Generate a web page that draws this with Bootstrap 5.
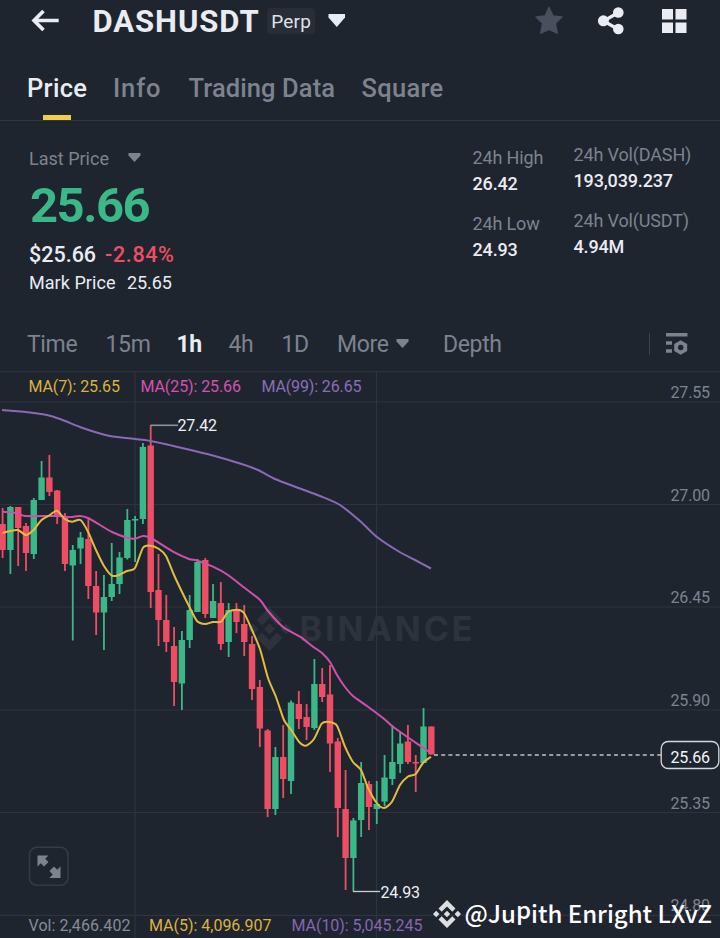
<!DOCTYPE html>
<html lang="en">
<head>
<meta charset="utf-8">
<meta name="viewport" content="width=device-width, initial-scale=1">
<title>DASHUSDT Perp</title>
<link href="https://cdn.jsdelivr.net/npm/bootstrap@5.3.0/dist/css/bootstrap.min.css" rel="stylesheet">
<style>
:root{--bg:#1f252f;--line:#2f363f;--muted:#7c838f;--bright:#e9ecf2;--up:#3ab888;--down:#ee4e63;--gold:#e5c04a}
body{background:var(--bg);color:var(--bright);font-family:Roboto,"Liberation Sans",sans-serif;overflow:hidden}
.screen{width:720px;height:938px}
.topbar{height:41px;padding-left:30px;padding-right:33px}
.pair{font-size:31px;line-height:40px;letter-spacing:.95px;margin-left:32.5px;padding-top:2px}
.perp{font-size:19px;line-height:28px;height:26px;width:48px;background:#282d37;border-radius:4px;letter-spacing:.2px;margin-left:7.5px;color:#dfe2e8}
.pair-caret{margin-left:13px}
.share{margin-left:34px}
.tiles{margin-left:37px}
.section-tabs{display:grid;grid-template-columns:86px 75.500px 173px auto;height:80px;padding:30px 0 0 27px;border-bottom:1px solid var(--line);font-size:25.5px;font-weight:500;line-height:34px;letter-spacing:.3px;color:var(--muted)}
.section-tabs .active{color:var(--bright)}
.section-tabs .wide{letter-spacing:.1px}
.section-tabs .info{letter-spacing:.9px}
.marker{display:block;width:28px;height:5px;margin:10px 0 0 16px;background:#f0cc48}
.summary{height:196px;padding:0 27.5px 0 29px;line-height:26px;font-size:18px}
.quote{padding-top:25px}
.caption-muted{color:var(--muted)}
.caption-muted svg{margin-left:19px;vertical-align:3px}
.big-price{font-size:49px;line-height:68px;letter-spacing:-1.5px;color:var(--up);margin-left:1px}
.fiat{font-size:21.5px;font-weight:500;line-height:30px}
.fiat .text-down{margin-left:9px;letter-spacing:.6px;color:var(--down)}
.mark-row{line-height:26px;letter-spacing:.05px}
.mark-row b{font-weight:400;margin-left:7px;letter-spacing:-.1px}
.stats{display:grid;grid-template-columns:101px 119px;letter-spacing:-.15px}
.stats dl{margin:0}
.stats dt{font-weight:400;color:var(--muted);line-height:26px}
.stats dd{font-weight:500;margin:0 0 14px;line-height:26px}
.stats dl:first-child{padding-top:24px}
.stats dl:last-child{padding-top:21px}
.frames{height:54px;padding:0 32px 0 27px;font-size:23px;line-height:30px;color:var(--muted)}
.frame-list{display:grid;grid-template-columns:78.500px 71px 52px 53px 55.500px 106px 70px;letter-spacing:-.35px;padding-top:2px}
.frame-list .active{color:var(--bright)}
.frame-list svg{margin-left:7px;vertical-align:4px}
.divide{width:1px;height:22px;background:#3d434d}
.tune{margin-left:16px}
.chart text{font-family:Roboto,"Liberation Sans",sans-serif}
.chart .brandmark{font-family:Inter,sans-serif;font-weight:700}
.signature{font-family:"Noto Sans CJK SC",sans-serif;font-weight:500;font-size:24px;line-height:36px;left:433px;top:525px;color:#fff;white-space:nowrap}
.signature span{margin-left:3.5px;position:relative;top:-1px}
.signature i{font-style:normal;position:relative;top:-4px}
</style>
<script src="https://cdn.jsdelivr.net/npm/bootstrap@5.3.0/dist/js/bootstrap.bundle.min.js"></script>
</head>
<body>
<main class="screen d-flex flex-column position-relative">
  <header class="topbar d-flex align-items-center flex-shrink-0">
    <svg width="30" height="24" viewBox="0 0 30 24" fill="none" stroke="#e9ecf2" stroke-width="3.6"><path d="M28.7 11.5H4M13.5 2 4 11.5l9.500 9.500"/></svg>
    <div class="pair fw-bold">DASHUSDT</div>
    <div class="perp text-center">Perp</div>
    <svg class="pair-caret" width="18" height="14" viewBox="0 0 18 14" fill="#e9ecf2"><path d="M.500 0h16.500v3.500L8.800 13 .500 3.500z"/></svg>
    <div class="ms-auto d-flex align-items-center">
      <svg width="28" height="30" viewBox="0 0 28 30" fill="#4a4f5e" stroke="#4a4f5e" stroke-width="1.500" stroke-linejoin="round"><path d="m14 1.500 3.900 8.500 9 1-6.600 6.200 1.900 9.900-8.200-3.800-8.200 3.800 1.900-9.900L1.100 11l9-1z"/></svg>
      <svg class="share" width="28" height="30" viewBox="0 0 28 30" fill="#e9ecf2"><path d="M21.500 6.500 6.500 15l15 8.500" fill="none" stroke="#e9ecf2" stroke-width="3.200"/><circle cx="21.300" cy="6.500" r="5.300"/><circle cx="6.400" cy="14.800" r="5.500"/><circle cx="21.300" cy="23" r="5.300"/></svg>
      <svg class="tiles" width="25" height="24" viewBox="0 0 25 24" fill="#e9ecf2"><path d="M0 0h11v10.500H0zM13.500 0h11v10.500h-11zM0 13.500h11V24H0zM13.500 13.500h11V24h-11z"/></svg>
    </div>
  </header>
  <nav class="section-tabs flex-shrink-0">
    <div class="active">Price<span class="marker"></span></div><div class="info">Info</div><div class="wide">Trading Data</div><div>Square</div>
  </nav>
  <section class="summary d-flex justify-content-between flex-shrink-0">
    <div class="quote">
      <div class="caption-muted">Last Price<svg width="13" height="9" viewBox="0 0 13 9" fill="#7c838f"><path d="M.500 0h12v2.500L6.500 9l-6-6.500z"/></svg></div>
      <div class="big-price fw-bold">25.66</div>
      <div class="fiat">$25.66<span class="text-down">-2.84%</span></div>
      <div class="mark-row">Mark Price <b>25.65</b></div>
    </div>
    <div class="stats">
      <dl><dt>24h High</dt><dd>26.42</dd><dt>24h Low</dt><dd>24.93</dd></dl>
      <dl><dt>24h Vol(DASH)</dt><dd>193,039.237</dd><dt>24h Vol(USDT)</dt><dd>4.94M</dd></dl>
    </div>
  </section>
  <section class="frames d-flex align-items-center flex-shrink-0">
    <div class="frame-list">
      <span>Time</span><span>15m</span><span class="active fw-bold">1h</span><span>4h</span><span>1D</span>
      <span>More<svg width="13" height="9" viewBox="0 0 13 9" fill="#7c838f"><path d="M.500 0h12v2.500L6.500 9l-6-6.500z"/></svg></span><span>Depth</span>
    </div>
    <div class="divide ms-auto"></div>
    <svg class="tune" width="22" height="22" viewBox="0 0 22 22" fill="#7c838f"><path d="M0 0h21.500v3.600H0zM0 8.300h6v3.500H0zM0 16.200h6v3.600H0z"/><path fill-rule="evenodd" d="m14.700 7.200 6.500 3.700v7.200l-6.500 3.700-6.500-3.700v-7.200zm0 4.500a2.800 2.800 0 1 0 .01 0z"/></svg>
  </section>
  <section class="position-relative flex-shrink-0">
    <svg id="chart" class="chart d-block" width="720" height="567" viewBox="0 371 720 567">
      <g stroke="#2d343e" stroke-width="1.200" fill="none">
        <path stroke-width="1.600" d="M0 371.500H720"/>
        <path d="M0 402H720M0 504.500H720M0 607H720M0 710H720M0 812.500H720M0 915.300H720M135 371V938M376.500 371V938"/>
      </g>
      <g fill="#2d333d">
        <path d="m269.500 607 13 13-5.500 5.500-7.500-7.500-7.500 7.500-5.500-5.500zM269.500 651l13-13-5.500-5.500-7.500 7.500-7.500-7.500-5.500 5.500zM269.500 623.500l5.500 5.500-5.500 5.500-5.500-5.500zM253 623.500l5.500 5.500-5.500 5.500-5.500-5.500zM286 623.500l5.500 5.500-5.500 5.500-5.500-5.500z"/>
        <text class="brandmark" x="299.500" y="641" font-size="34" textLength="173">BINANCE</text>
      </g>
      <g id="candles"></g>
      <g fill="none" stroke-width="2" stroke-linejoin="round">
        <path id="ma99" stroke="#8a69b8"/><path id="ma25" stroke="#cf50ac"/><path id="ma7" stroke="#e5bc3f"/>
      </g>
      <path d="M434 755H661" stroke="#bfc3ca" stroke-width="1.300" stroke-dasharray="4 3.200"/>
      <path d="M150.500 425.300H178" stroke="#8d929c" stroke-width="1.600"/><path d="M353 891.500H380" stroke="#c9ccd2" stroke-width="1.300"/>
      <g font-size="16">
        <text x="28.500" y="392" fill="#dcb23c" textLength="91.500">MA(7): 25.65</text>
        <text x="140.500" y="392" fill="#d452b0" textLength="100.500">MA(25): 25.66</text>
        <text x="261.500" y="392" fill="#8b6eb9" textLength="100">MA(99): 26.65</text>
        <text x="28.500" y="931" fill="#858c98" textLength="102">Vol: 2,466.402</text>
        <text x="149" y="931" fill="#dcb23c" textLength="122.500">MA(5): 4,096.907</text>
        <text x="291.500" y="931" fill="#8467b0" textLength="131">MA(10): 5,045.245</text>
        <g fill="#eef0f5"><text x="177.500" y="431" textLength="39.500">27.42</text><text x="380.500" y="898" textLength="39.500">24.93</text></g>
      </g>
      <g font-size="16" fill="#7c838f">
        <text x="670.500" y="398" textLength="39.500">27.55</text><text x="670.500" y="501" textLength="39.500">27.00</text>
        <text x="670.500" y="603" textLength="39.500">26.45</text><text x="670.500" y="706" textLength="39.500">25.90</text>
        <text x="670.500" y="809" textLength="39.500">25.35</text><text x="670.500" y="911" textLength="39.500">24.80</text>
      </g>
      <rect x="661.200" y="741.500" width="57.600" height="27" rx="7" fill="#1f252f" stroke="#d5d8dd" stroke-width="1.300"/>
      <text x="670.500" y="763" font-size="16" fill="#f4f6fa" textLength="39.500">25.66</text>
      <rect x="29.500" y="847.300" width="38.500" height="38" rx="7.500" fill="none" stroke="#343b45" stroke-width="1.600"/>
      <path fill="#7c838f" d="M37.500 855.500h11l-3.300 3.300 3.300 3.300-4.500 4.500-3.200-3.300-3.300 3.300zM60.500 878v-11.500l-3.300 3.300-3.300-3.300-4.500 4.500 3.300 3.400-3.300 3.600z"/>
    </svg>
    <div class="signature position-absolute d-flex align-items-center">
      <svg class="flex-shrink-0" width="28" height="28" viewBox="0 0 28 28" fill="#dcdee2"><path d="m14 0 8.500 8.500-3.200 3.200L14 6.400l-5.300 5.300-3.200-3.200zM14 28l8.500-8.500-3.200-3.200-5.300 5.300-5.300-5.300-3.200 3.200zM14 10.800l3.200 3.200-3.200 3.200-3.200-3.200zM3.200 10.800 6.400 14l-3.200 3.200L0 14zM24.800 10.800 28 14l-3.200 3.200-3.200-3.200z"/></svg>
      <span>@Ju<i>p</i>ith Enright LXvZ</span>
    </div>
  </section>
</main>
<script>
// Each candle: direction, high, body top, body bottom, low (chart y units)
const candles = [
[0,508,524,550,558],[1,506,507,550,574],[0,507,507,528,566],[0,523,526,553,571],[1,498,500,554,559],[1,461,477.5,500,500],[0,455,477.5,492,496],[0,490,490.5,515.5,524],
[0,513,516.5,564,571],[1,545,550,565.5,640.5],[1,532,537.5,548.5,564],[0,519,539,586,599],[0,571,586,612.5,635],[1,575,597,612.5,650],[1,543,584,597,601],[1,552,557.5,584,594],
[1,509,520,558,559.5],[1,516,519,520.5,562],[1,443,447,519,524],[0,425,445.5,592,608],[0,554,590,620,646],[0,595,620,642,652],[0,627,646,682,706],[1,631,640,683.5,710],
[1,595,610,640,648],[1,559,562,612,612],[0,558,560,614,618],[1,584,601,618,618],[0,582,603,644,650],[1,603,610,642,657],[0,603,610.5,622,633],[0,605,624,642,656],
[0,636,644,689,700],[0,680,687,728.5,747],[0,729,730.5,809,817],[1,747,757,809,815],[0,725,757,779,798],[1,700.5,702.5,781,794],[0,691,704,719,729],[0,704,717,727,740],
[1,659,684,728,730],[0,668,684,697,702],[0,665,694.5,743.5,772],[0,738,741.5,808,837],[0,770,809,858,890],[1,818,820.5,858,891.5],[1,762,783,820,837],[0,781,784,807,830],
[1,781,804,809,824],[1,755,777.5,801.5,806],[1,725,762,779,785],[1,732,743.5,764,773],[0,725,741.5,762,764],[0,755,762,763.5,792],[1,708,726.5,763,763],[0,726.5,726.5,754.5,754.5]];
const colors = ["#ee4e63", "#3ab888"];
document.getElementById("candles").innerHTML = candles.map(([up, hi, top, bot, lo], i) => {
  const x = 2.6 + i * 7.795;
  return `<path d="M${x} ${hi}V${lo}" stroke="${colors[up]}" stroke-width="1.8"/><rect x="${x - 3.2}" y="${top}" width="6.400" height="${bot - top}" fill="${colors[up]}"/>`;
}).join("");

// Smooth curve through the given points
function curve(p) {
  let d = `M${p[0]} ${p[1]}`;
  for (let i = 0; i < p.length - 2; i += 2) {
    const a = i ? i - 2 : i, c = i + 2, e = i + 4 < p.length ? i + 4 : c;
    d += `C${p[i] + (p[c] - p[a]) / 8} ${p[i + 1] + (p[c + 1] - p[a + 1]) / 8} ${p[c] - (p[e] - p[i]) / 8} ${p[c + 1] - (p[e + 1] - p[i + 1]) / 8} ${p[c]} ${p[c + 1]}`;
  }
  return d;
}
const lines = {
ma99:[2,410,15,411,30,412.5,47,415,60,419,80,427,95,432,110,436,135,439,145,440,165,444,180,447.5,211,455,240,463.5,258,470,275,479,300,488.5,320,496,340,505,360,521,377,537,398,551,415,560,431,568.5],
ma25:[2.7,511.7,17,513,25,516,57,516,70,517,80,516,88,518,100,525,112,532,127,537.7,135,538.7,143,536,151,538,173,551.7,189,559,197,560.5,213,566.7,228,575,243,586.7,260,600,268,611,283,627,300,636.7,313,646.7,322,653,330,662,337,675,345,687,353,696,368,706.7,383,718,392,726,407,736.7,431,753],
ma7:[2.7,533,10,531,18,530,26,535,33.500,530,41.500,520,50,515,57,510.7,64.500,518.7,72,521.7,80.500,520,88,531.7,96,550,104,566,112,575.7,119,575,127,571,135,568,143,547.7,150.500,545.7,159,549,166,556,174,575,182,592,189,606,197,621,205,624,213,622,221,621.7,228,612,237,609.7,244,613,252,630,260,649,268,678,276,697,284,720,290.500,729,299,741.7,306,745.7,314,739,321.7,723.7,329,722,337,725.7,345,746.7,353,762,361,770,368,787.7,376.7,803,384,808,392,801.7,400,785,407.7,776.7,415.7,774,423,763,431,756.7]};
for (const id in lines) document.getElementById(id).setAttribute("d", curve(lines[id]));
</script>
</body>
</html>
